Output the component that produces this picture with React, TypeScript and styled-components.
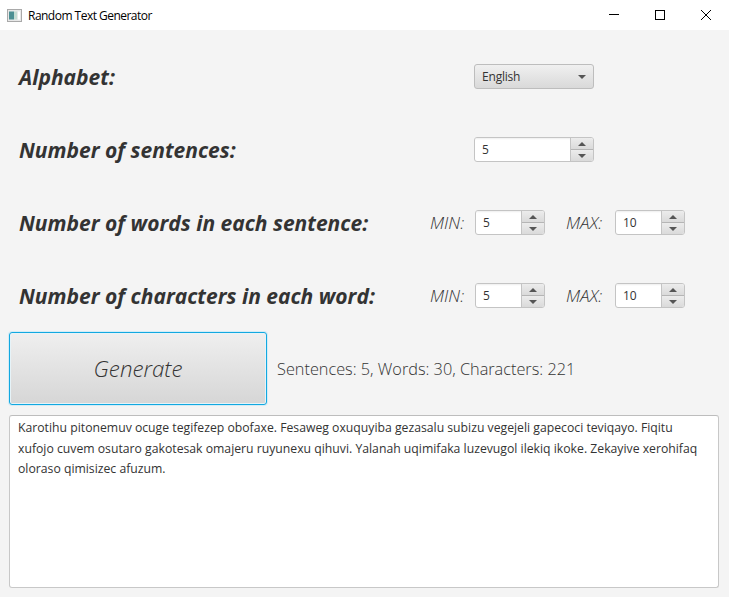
import * as React from "react";
import styled, { createGlobalStyle } from "styled-components";

const GlobalStyle = createGlobalStyle`
    html, body {
        margin: 0;
        padding: 0;
        background: #f4f4f4;
    }
    body {
        font-family: "Open Sans", "Noto Sans", sans-serif;
    }
`;

const Window = styled.div`
    width: 729px;
    height: 597px;
    overflow: hidden;
    display: flex;
    flex-direction: column;
    background: #f4f4f4;
`;

const TitleBar = styled.div`
    height: 30px;
    flex: none;
    background: #fff;
    display: flex;
    align-items: center;
    padding-left: 7px;
`;

const TitleText = styled.span`
    margin-left: 6px;
    font-family: "Open Sans", sans-serif;
    font-size: 12px;
    letter-spacing: -0.52px;
    color: #000;
`;

const WindowButtons = styled.div`
    margin-left: auto;
    display: flex;
`;

const WindowButton = styled.div`
    width: 46px;
    height: 30px;
    display: flex;
    align-items: center;
    justify-content: center;
`;

const Content = styled.div`
    flex: 1;
    display: flex;
    flex-direction: column;
    padding: 10px 10px 9px 9px;
`;

const Row = styled.div`
    height: 73px;
    flex: none;
    display: flex;
    align-items: center;
    padding-left: 10px;
`;

const Heading = styled.div`
    flex: 0 0 411px;
    font-size: 21px;
    font-weight: 700;
    font-style: italic;
    color: #333;
`;

const Controls = styled.div<{ $inset?: number }>`
    display: flex;
    align-items: center;
    padding-left: ${(p) => p.$inset ?? 0}px;
`;

const FieldLabel = styled.span<{ $width: number }>`
    width: ${(p) => p.$width}px;
    font-size: 17.2px;
    font-weight: 300;
    font-style: italic;
    color: #333;
`;

const Select = styled.div`
    width: 120px;
    height: 25px;
    box-sizing: border-box;
    display: flex;
    align-items: center;
    justify-content: space-between;
    padding: 0 7px 0 7px;
    border: 1px solid #bdbdbd;
    border-radius: 3px;
    background: linear-gradient(#f0f0f0, #d9d9d9);
    font-size: 12px;
    letter-spacing: -0.2px;
    color: #333;
`;

const Caret = styled.span<{ $up?: boolean }>`
    width: 0;
    height: 0;
    border-left: 4.5px solid transparent;
    border-right: 4.5px solid transparent;
    ${(p) =>
        p.$up
            ? "border-bottom: 4px solid #555;"
            : "border-top: 4px solid #555;"}
`;

const Spinner = styled.div<{ $width: number; $gap?: number }>`
    width: ${(p) => p.$width}px;
    height: 25px;
    margin-right: ${(p) => p.$gap ?? 0}px;
    box-sizing: border-box;
    display: flex;
    border: 1px solid #c4c4c4;
    border-radius: 3px;
    background: #fff;
    overflow: hidden;
`;

const SpinnerValue = styled.div`
    flex: 1;
    display: flex;
    align-items: center;
    padding-left: 7px;
    font-size: 12px;
    color: #333;
    box-shadow: inset 0 2px 2px -1px #eee;
`;

const SpinnerButtons = styled.div`
    flex: 0 0 22px;
    display: flex;
    flex-direction: column;
    border-left: 1px solid #c4c4c4;
`;

const SpinnerButton = styled.div`
    flex: 1;
    display: flex;
    align-items: center;
    justify-content: center;
    background: linear-gradient(#ececec, #dadada);
    & + & {
        border-top: 1px solid #b5b5b5;
    }
`;

const ActionRow = styled.div`
    display: flex;
    align-items: center;
`;

const GenerateButton = styled.button`
    width: 258px;
    height: 73px;
    box-sizing: border-box;
    padding: 0;
    border: 1px solid #12a8e0;
    border-radius: 3px;
    background: linear-gradient(#efefef, #d6d6d6);
    box-shadow: 0 0 0 1px #d3ecf6, inset 0 0 0 1px #e6f3f8;
    font-family: inherit;
    font-size: 22.3px;
    font-weight: 300;
    font-style: italic;
    color: #333;
`;

const Stats = styled.span`
    margin-left: 10px;
    font-size: 16.3px;
    font-weight: 300;
    color: #333;
`;

const Output = styled.div`
    flex: 1;
    margin-top: 10px;
    box-sizing: border-box;
    padding: 2px 16px 2px 8px;
    border: 1px solid #c8c8c8;
    border-top-color: #bdbdbd;
    border-radius: 3px;
    background: #fff;
    font-size: 12.22px;
    line-height: 20.5px;
    color: #333;
`;

const AppIcon: React.FC = () => (
    <svg width="15" height="13" viewBox="0 0 15 13">
        <rect x="0.5" y="0.5" width="14" height="12" fill="#e8e8e8" stroke="#a9a9a9" />
        <rect x="2" y="2.5" width="5" height="8" fill="#4d8f93" />
        <rect x="7" y="2.5" width="3" height="8" fill="#c5dcd3" />
        <rect x="11" y="2.5" width="2" height="8" fill="#fff" />
    </svg>
);

const IntSpinner: React.FC<{ value: number; width: number; gap?: number }> = ({
    value,
    width,
    gap,
}) => (
    <Spinner $width={width} $gap={gap}>
        <SpinnerValue>{value}</SpinnerValue>
        <SpinnerButtons>
            <SpinnerButton>
                <Caret $up />
            </SpinnerButton>
            <SpinnerButton>
                <Caret />
            </SpinnerButton>
        </SpinnerButtons>
    </Spinner>
);

const MinMax: React.FC = () => (
    <Controls>
        <FieldLabel $width={45}>MIN:</FieldLabel>
        <IntSpinner value={5} width={70} gap={21} />
        <FieldLabel $width={49}>MAX:</FieldLabel>
        <IntSpinner value={10} width={70} />
    </Controls>
);

export default function App() {
    return (
        <Window>
            <GlobalStyle />
            <TitleBar>
                <AppIcon />
                <TitleText>Random Text Generator</TitleText>
                <WindowButtons>
                    <WindowButton>
                        <svg width="10" height="10" viewBox="0 0 10 10">
                            <path d="M0 4.5H10" stroke="#000" fill="none" />
                        </svg>
                    </WindowButton>
                    <WindowButton>
                        <svg width="10" height="10" viewBox="0 0 10 10">
                            <rect x="0.5" y="0.5" width="9" height="9" stroke="#000" fill="none" />
                        </svg>
                    </WindowButton>
                    <WindowButton>
                        <svg width="10" height="10" viewBox="0 0 10 10">
                            <path d="M0 0L10 10M10 0L0 10" stroke="#000" fill="none" />
                        </svg>
                    </WindowButton>
                </WindowButtons>
            </TitleBar>
            <Content>
                <Row>
                    <Heading>Alphabet:</Heading>
                    <Controls $inset={44}>
                        <Select>
                            English
                            <Caret />
                        </Select>
                    </Controls>
                </Row>
                <Row>
                    <Heading>Number of sentences:</Heading>
                    <Controls $inset={44}>
                        <IntSpinner value={5} width={120} />
                    </Controls>
                </Row>
                <Row>
                    <Heading>Number of words in each sentence:</Heading>
                    <MinMax />
                </Row>
                <Row>
                    <Heading>Number of characters in each word:</Heading>
                    <MinMax />
                </Row>
                <ActionRow>
                    <GenerateButton>Generate</GenerateButton>
                    <Stats>Sentences: 5, Words: 30, Characters: 221</Stats>
                </ActionRow>
                <Output>
                    Karotihu pitonemuv ocuge tegifezep obofaxe. Fesaweg oxuquyiba gezasalu subizu vegejeli
                    gapecoci teviqayo. Fiqitu xufojo cuvem osutaro gakotesak omajeru ruyunexu qihuvi. Yalanah
                    uqimifaka luzevugol ilekiq ikoke. Zekayive xerohifaq oloraso qimisizec afuzum.
                </Output>
            </Content>
        </Window>
    );
}
